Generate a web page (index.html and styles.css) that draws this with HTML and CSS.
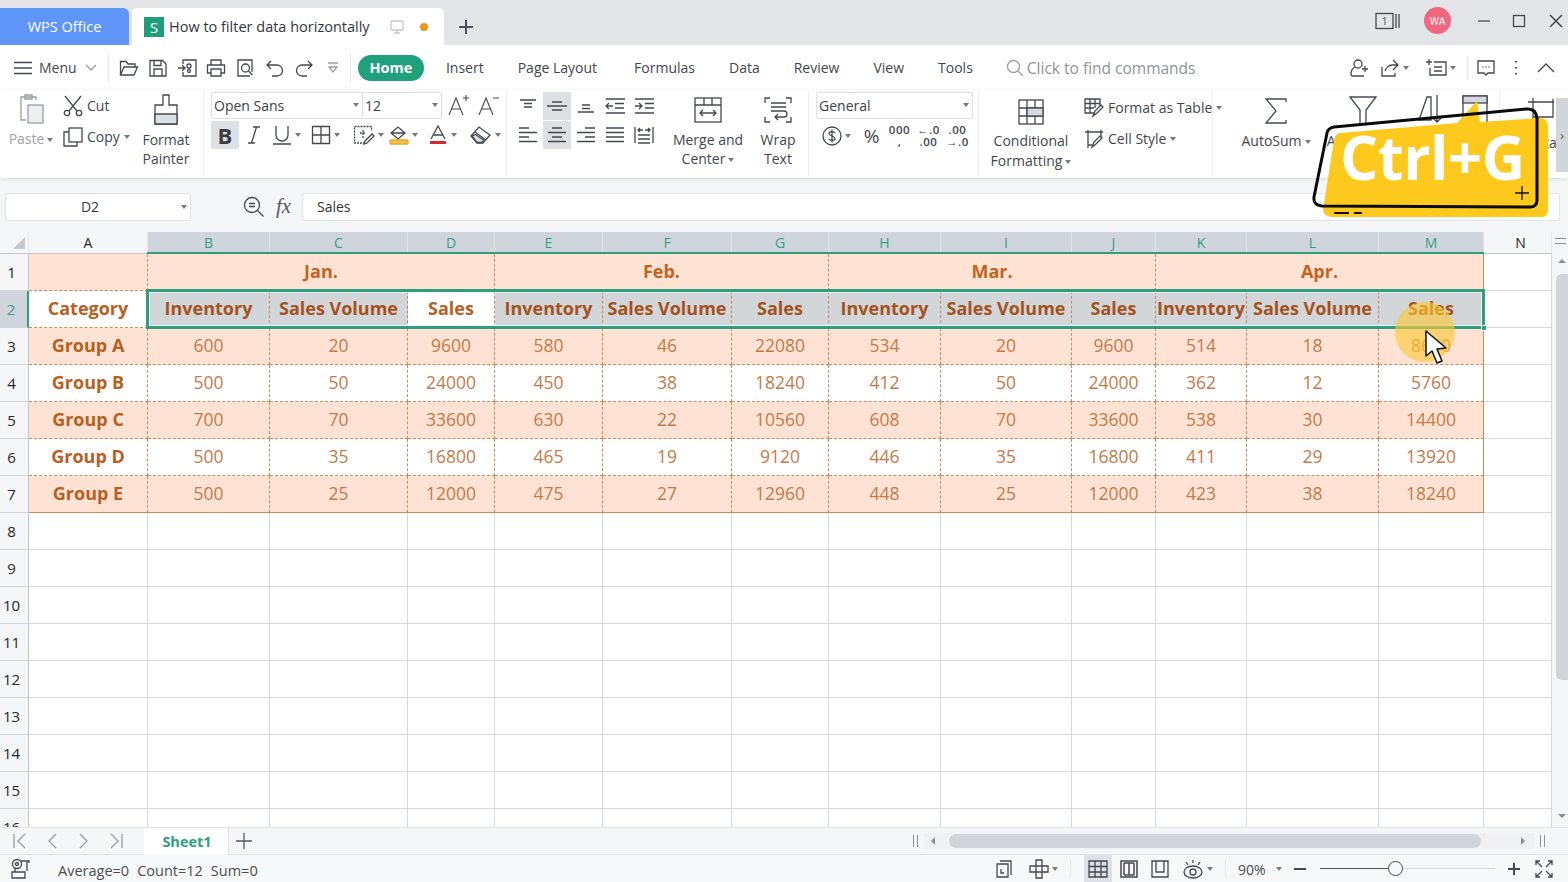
FILE: index.html
```html
<!DOCTYPE html>
<html lang="en">
<head>
<meta charset="utf-8">
<title>How to filter data horizontally</title>
<link rel="stylesheet" href="styles.css">
</head>
<body>
<div class="app">
  <header class="titlebar">
    <div class="wps-tab">WPS Office</div>
    <div class="doc-tab">
      <span class="doc-logo">S</span>
      <span class="doc-name">How to filter data horizontally</span>
      <svg class="ic mon" width="16" height="16" viewBox="0 0 16 16"><rect x="2" y="2" width="12" height="9" rx="1"/><path d="M8 11v3M5 14h6"/></svg>
      <span class="dot"></span>
    </div>
    <svg class="ic plus" width="16" height="16" viewBox="0 0 16 16"><path d="M8 1v14M1 8h14"/></svg>
    <div class="win">
      <svg class="ic" width="26" height="18" viewBox="0 0 26 18"><rect x="1" y="1.500" width="17" height="15"/><path d="M21 2v14M24 2v14"/><text x="6.500" y="13" class="tiny">1</text></svg>
      <span class="avatar">WA</span>
      <svg class="ic w-min" width="14" height="14" viewBox="0 0 14 14"><path d="M1 7h12"/></svg>
      <svg class="ic w-max" width="14" height="14" viewBox="0 0 14 14"><rect x="1.500" y="1.500" width="11" height="11"/></svg>
      <svg class="ic w-x" width="14" height="14" viewBox="0 0 14 14"><path d="M1 1l12 12M13 1L1 13"/></svg>
    </div>
  </header>

  <nav class="menubar">
    <svg class="ic" width="18" height="14" viewBox="0 0 18 14"><path d="M0 1.500h18M0 7h18M0 12.500h18"/></svg>
    <span class="menu-label">Menu</span>
    <svg class="ic lite chev" width="12" height="8" viewBox="0 0 12 8"><path d="M1 1l5 5 5-5"/></svg>
    <span class="vsep"></span>
    <div class="quick">
      <svg class="ic" width="20" height="20" viewBox="0 0 20 20"><path d="M1.500 17V3.500h5.500l2 2.500h7v3M1.500 17H15l3.500-8H5z"/></svg>
      <svg class="ic" width="20" height="20" viewBox="0 0 20 20"><path d="M2 2.500h12.500l3.500 3.500v12H2zM6 2.500v5h7v-5M6 18v-7h8v7"/></svg>
      <svg class="ic" width="20" height="20" viewBox="0 0 20 20"><path d="M6 6V2h13v16H6v-4M1 10h7M5 7l3 3-3 3"/><circle cx="12" cy="8" r="2"/><circle cx="12" cy="13" r="1.500"/></svg>
      <svg class="ic" width="20" height="20" viewBox="0 0 20 20"><path d="M5 7V2h10v5M5 15H1.500V7h17v8H15M5 11h10v7H5z"/></svg>
      <svg class="ic" width="20" height="20" viewBox="0 0 20 20"><path d="M15 18H3V2h14v12"/><circle cx="10.500" cy="10" r="4"/><path d="M13.500 13l4 4"/></svg>
      <svg class="ic" width="20" height="20" viewBox="0 0 20 20"><path d="M6 3L2 7l4 4M2 7h10a5.500 5.500 0 0 1 0 11H7"/></svg>
      <svg class="ic" width="20" height="20" viewBox="0 0 20 20"><path d="M14 3l4 4-4 4M18 7H8a5.500 5.500 0 0 0 0 11h5"/></svg>
      <svg class="ic lite qa" width="12" height="12" viewBox="0 0 12 12"><path d="M1 1h10M2 5h8L6 10z"/></svg>
    </div>
    <span class="vsep sep2"></span>
    <span class="home">Home</span>
    <div class="tabs">
      <span>Insert</span><span>Page Layout</span><span class="t-form">Formulas</span><span>Data</span><span>Review</span><span>View</span><span>Tools</span>
    </div>
    <div class="find">
      <svg class="ic lite" width="18" height="18" viewBox="0 0 18 18"><circle cx="7.500" cy="7.500" r="6"/><path d="M12 12l5 5"/></svg>
      <span>Click to find commands</span>
    </div>
    <div class="menu-right">
      <svg class="ic" width="20" height="20" viewBox="0 0 20 20"><circle cx="9" cy="6" r="4"/><path d="M6 9c-2 1-4 4-4 7 0 1 1 2 2 2h11M13 11h6M16 8v6"/></svg>
      <span class="with-caret"><svg class="ic" width="20" height="20" viewBox="0 0 20 20"><path d="M13 2l5 5-5 5M18 7h-6c-3 0-6 3-7 6M2 9v9h13v-3"/></svg><i class="caret"></i></span>
      <span class="with-caret"><svg class="ic" width="22" height="20" viewBox="0 0 22 20"><path d="M4 1v6M1 4h6M9 4h12v13H5V10M9 9h8M9 13h8"/></svg><i class="caret"></i></span>
      <span class="vsep sep3"></span>
      <svg class="ic" width="18" height="18" viewBox="0 0 18 18"><path d="M1 2h16v12h-6l-2 2-2-2H1zM5.500 8h1M8.500 8h1M11.500 8h1"/></svg>
      <svg class="ic dots" width="4" height="16" viewBox="0 0 4 16"><path d="M2 1v1.500M2 7v1.500M2 13v1.500" stroke-width="2"/></svg>
      <svg class="ic up" width="18" height="10" viewBox="0 0 18 10"><path d="M1 9l8-8 8 8"/></svg>
    </div>
  </nav>

  <section class="ribbon">
    <div class="grp g-clip">
      <div class="btn paste">
        <svg class="ic lite" width="30" height="30" viewBox="0 0 30 30"><path d="M20 6V3H5v23h5"/><path d="M9 1h7v4H9z"/><rect x="12" y="11" width="15" height="18" fill="#eceef0"/></svg>
        <span class="lbl off">Paste<i class="caret"></i></span>
      </div>
      <div class="stack clip-stack">
        <div class="row-btn"><svg class="ic" width="20" height="22" viewBox="0 0 20 22"><path d="M2 1l12 15M18 1L6 16"/><circle cx="4" cy="18" r="2.700"/><circle cx="16" cy="18" r="2.700"/></svg><span>Cut</span></div>
        <div class="row-btn"><svg class="ic" width="20" height="20" viewBox="0 0 20 20"><rect x="6" y="1" width="13" height="14"/><path d="M6 5H1v14h13v-4"/></svg><span>Copy</span><i class="caret"></i></div>
      </div>
      <div class="btn painter">
        <svg class="ic" width="26" height="32" viewBox="0 0 26 32"><path d="M10 1h6v10h8v19H2V11h8z"/><path d="M2 20h22v10H2z" fill="#dcdfe3"/></svg>
        <span class="lbl">Format<br>Painter</span>
      </div>
    </div>

    <div class="grp g-font">
      <div class="font-top">
        <div class="combo c-font"><span>Open Sans</span><i class="caret"></i></div>
        <div class="combo c-size"><span>12</span><i class="caret"></i></div>
        <svg class="ic aa" width="24" height="24" viewBox="0 0 24 24"><path d="M2 21L9 4l7 17M4.500 15h9M16 4h6M19 1v6"/></svg>
        <svg class="ic aa" width="24" height="24" viewBox="0 0 24 24"><path d="M2 21L9 4l7 17M4.500 15h9M16 4h6"/></svg>
      </div>
      <div class="font-bot">
        <span class="tool t-b on"><b class="bold-b">B</b></span>
        <span class="tool t-i"><svg class="ic" width="14" height="18" viewBox="0 0 14 18"><path d="M9.500 1L4.500 17M6 1h7M1 17h7"/></svg></span>
        <span class="tool t-c"><svg class="ic" width="20" height="20" viewBox="0 0 20 20"><path d="M4 1v9a6 6 0 0 0 12 0V1M1 19h18"/></svg><i class="caret"></i></span>
        <span class="tool t-c"><svg class="ic" width="20" height="20" viewBox="0 0 20 20"><path d="M1.500 1.500h17v17h-17zM10 1.500v17M1.500 10h17"/></svg><i class="caret"></i></span>
        <span class="tool t-c t-wide"><svg class="ic" width="22" height="20" viewBox="0 0 22 20"><path d="M12 18H1.500V1.500h17V6M7 8h6M10 5v8" stroke-dasharray="2 1"/><path d="M12 16l7-7 2 2-7 7-3 1z"/></svg><i class="caret"></i></span>
        <span class="tool t-c"><svg class="ic" width="20" height="20" viewBox="0 0 20 20"><path d="M2 8l7-6 7 6-7 6zM2 8h14"/><rect x="1" y="15" width="18" height="4" rx="1" fill="#f5c342" stroke="#e0a92a"/></svg><i class="caret"></i></span>
        <span class="tool t-c"><svg class="ic" width="20" height="20" viewBox="0 0 20 20"><path d="M3 14L10 1l7 13M5.500 10h9"/><path d="M2 17.500h16" stroke="#d8262c" stroke-width="3"/></svg><i class="caret"></i></span>
        <span class="tool t-c t-wide"><svg class="ic" width="22" height="20" viewBox="0 0 22 20"><path d="M1 11l8-9 11 8-7 8H7zM5 7l11 8"/><path d="M5.500 9.500l8 5.500-1.500 2.500H7L2 11z" fill="#dcdfe3"/></svg><i class="caret"></i></span>
      </div>
    </div>

    <div class="grp g-align">
      <div class="align-grid">
        <span class="a"><svg class="ic" width="18" height="14" viewBox="0 0 18 14"><path d="M1 1h16M5 4.500h8M5 8h8"/></svg></span>
        <span class="a on"><svg class="ic" width="20" height="14" viewBox="0 0 20 14"><path d="M5 3h10M0 7h20M5 11h10"/></svg></span>
        <span class="a"><svg class="ic" width="18" height="14" viewBox="0 0 18 14"><path d="M5 6h8M5 9.500h8M1 13h16"/></svg></span>
        <span class="a"><svg class="ic" width="20" height="16" viewBox="0 0 20 16"><path d="M1 1h19M1 15h19M10 5.500h9M10 10h9M1 8h7M4 5L1 8l3 3"/></svg></span>
        <span class="a"><svg class="ic" width="20" height="16" viewBox="0 0 20 16"><path d="M1 1h19M1 15h19M11 5.500h9M11 10h9M1 8h7M5 5l3 3-3 3"/></svg></span>
        <span class="a"><svg class="ic" width="18" height="16" viewBox="0 0 18 16"><path d="M0 1h10M0 5.500h18M0 10h10M0 14.500h18"/></svg></span>
        <span class="a on"><svg class="ic" width="18" height="16" viewBox="0 0 18 16"><path d="M4 1h10M0 5.500h18M4 10h10M0 14.500h18"/></svg></span>
        <span class="a"><svg class="ic" width="18" height="16" viewBox="0 0 18 16"><path d="M8 1h10M0 5.500h18M8 10h10M0 14.500h18"/></svg></span>
        <span class="a"><svg class="ic" width="18" height="16" viewBox="0 0 18 16"><path d="M0 1h18M0 5.500h18M0 10h18M0 14.500h18"/></svg></span>
        <span class="a"><svg class="ic" width="20" height="18" viewBox="0 0 20 18"><path d="M1 1v16M19 1v16M4 9h12M4 13h12M4 17h12M4 4h5M11 4h5M6 2L4 4l2 2M14 2l2 2-2 2"/></svg></span>
      </div>
      <div class="btn merge">
        <svg class="ic" width="28" height="26" viewBox="0 0 28 26"><rect x="1" y="1" width="26" height="24"/><path d="M1 8h26M10 1v7M18 1v7M6 16h16M9 13l-3 3 3 3M19 13l3 3-3 3"/></svg>
        <span class="lbl">Merge and<br>Center<i class="caret"></i></span>
      </div>
      <div class="btn wrap">
        <svg class="ic" width="28" height="26" viewBox="0 0 28 26"><path d="M6 1H1v5M22 1h5v5M1 20v5h5M27 20v5h-5M7 6h15M7 10h15M7 14h13a2 2 0 0 1 0 6h-9M14 17l-3 3 3 3"/></svg>
        <span class="lbl">Wrap<br>Text</span>
      </div>
    </div>

    <div class="grp g-num">
      <div class="combo c-gen"><span>General</span><i class="caret"></i></div>
      <div class="num-row">
        <span class="with-caret n-cur"><svg class="ic" width="20" height="20" viewBox="0 0 20 20"><circle cx="10" cy="10" r="9"/><path d="M13 7c-1-2-6-2-6 .5S13 10 13 12.500 8 15 7 13M10 3.500v13"/></svg><i class="caret"></i></span>
        <span class="n-t n-pct">%</span>
        <span class="n-t n-small">000<br>,</span>
        <span class="n-t n-small">←.0<br>.00</span>
        <span class="n-t n-small">.00<br>→.0</span>
      </div>
    </div>

    <div class="grp g-style">
      <div class="btn cond">
        <svg class="ic" width="26" height="26" viewBox="0 0 26 26"><rect x="1" y="1" width="24" height="24"/><path d="M1 9h24M1 17h24M9 1v24M17 1v24"/><rect x="9" y="9" width="16" height="8" fill="#d5d8dc"/></svg>
        <span class="lbl">Conditional<br>Formatting<i class="caret"></i></span>
      </div>
      <div class="stack style-stack">
        <div class="row-btn"><svg class="ic" width="20" height="20" viewBox="0 0 20 20"><path d="M10 15H1V1h15v7M1 5.500h15M1 10h9M6 1v14M11 1v9"/><path d="M9 18l2-5 6-6 2 2-6 6z"/></svg><span>Format as Table</span><i class="caret"></i></div>
        <div class="row-btn"><svg class="ic" width="20" height="20" viewBox="0 0 20 20"><path d="M1 3h18M4 1v18M17 1v7M4 16h4"/><path d="M8 18l2-5 6-6 2 2-6 6z"/></svg><span>Cell Style</span><i class="caret"></i></div>
      </div>
    </div>

    <div class="grp g-edit">
      <div class="btn autosum">
        <svg class="ic" width="22" height="26" viewBox="0 0 22 26"><path d="M21 4V1H1l10 12L1 25h20v-3"/></svg>
        <span class="lbl">AutoSum<i class="caret"></i></span>
      </div>
      <div class="btn autofilter">
        <svg class="ic" width="28" height="30" viewBox="0 0 28 30"><path d="M1 1h26L17 14v14h-6V14z"/></svg>
        <span class="lbl">AutoFilter<i class="caret"></i></span>
      </div>
      <div class="btn sort">
        <svg class="ic" width="26" height="30" viewBox="0 0 26 30"><path d="M2 26L10 3h4v23H2zM20 1v27M16 24l4 4 4-4"/></svg>
      </div>
      <div class="btn fillbtn">
        <svg class="ic" width="26" height="30" viewBox="0 0 26 30"><rect x="1" y="1" width="24" height="28"/><rect x="1" y="1" width="24" height="7" fill="#d5d8dc"/></svg>
      </div>
    </div>

    <div class="grp g-last">
      <div class="btn crop">
        <svg class="ic" width="28" height="24" viewBox="0 0 28 24"><path d="M1 5h26M6 1v22M6 20h20V2"/></svg>
        <span class="lbl">Data</span>
      </div>
    </div>
    <div class="rib-more">›</div>
  </section>

  <section class="formula">
    <div class="namebox"><span>D2</span><i class="caret"></i></div>
    <svg class="ic zoom-ic" width="22" height="22" viewBox="0 0 22 22"><circle cx="9" cy="9" r="7.500"/><path d="M14.500 14.500l6 6M6 7.500h6M6 10.500h6"/></svg>
    <span class="fx">fx</span>
    <div class="fbox">Sales</div>
  </section>

  <section class="sheet-wrap">
    <div class="sheet">
      <div class="ch corner"><i></i></div><div class="ch">A</div><div class="ch s">B</div><div class="ch s">C</div><div class="ch s">D</div><div class="ch s">E</div><div class="ch s">F</div><div class="ch s">G</div><div class="ch s">H</div><div class="ch s">I</div><div class="ch s">J</div><div class="ch s">K</div><div class="ch s">L</div><div class="ch s">M</div><div class="ch ch-n">N</div>

      <div class="rh">1</div><div class="c p"></div><div class="c p m">Jan.</div><div class="c p m">Feb.</div><div class="c p m">Mar.</div><div class="c p m last">Apr.</div><div class="g"></div>

      <div class="rh sel-h">2</div><div class="c t">Category</div>
      <div class="c t gy">Inventory</div><div class="c t gy">Sales Volume</div><div class="c t">Sales</div>
      <div class="c t gy">Inventory</div><div class="c t gy">Sales Volume</div><div class="c t gy">Sales</div>
      <div class="c t gy">Inventory</div><div class="c t gy">Sales Volume</div><div class="c t gy">Sales</div>
      <div class="c t gy">Inventory</div><div class="c t gy">Sales Volume</div><div class="c t gy last">Sales</div><div class="g"></div>

      <div class="rh">3</div><div class="c t p">Group A</div><div class="c p">600</div><div class="c p">20</div><div class="c p">9600</div><div class="c p">580</div><div class="c p">46</div><div class="c p">22080</div><div class="c p">534</div><div class="c p">20</div><div class="c p">9600</div><div class="c p">514</div><div class="c p">18</div><div class="c p last">8640</div><div class="g"></div>

      <div class="rh">4</div><div class="c t">Group B</div><div class="c">500</div><div class="c">50</div><div class="c">24000</div><div class="c">450</div><div class="c">38</div><div class="c">18240</div><div class="c">412</div><div class="c">50</div><div class="c">24000</div><div class="c">362</div><div class="c">12</div><div class="c last">5760</div><div class="g"></div>

      <div class="rh">5</div><div class="c t p">Group C</div><div class="c p">700</div><div class="c p">70</div><div class="c p">33600</div><div class="c p">630</div><div class="c p">22</div><div class="c p">10560</div><div class="c p">608</div><div class="c p">70</div><div class="c p">33600</div><div class="c p">538</div><div class="c p">30</div><div class="c p last">14400</div><div class="g"></div>

      <div class="rh">6</div><div class="c t">Group D</div><div class="c">500</div><div class="c">35</div><div class="c">16800</div><div class="c">465</div><div class="c">19</div><div class="c">9120</div><div class="c">446</div><div class="c">35</div><div class="c">16800</div><div class="c">411</div><div class="c">29</div><div class="c last">13920</div><div class="g"></div>

      <div class="rh">7</div><div class="c t p b">Group E</div><div class="c p b">500</div><div class="c p b">25</div><div class="c p b">12000</div><div class="c p b">475</div><div class="c p b">27</div><div class="c p b">12960</div><div class="c p b">448</div><div class="c p b">25</div><div class="c p b">12000</div><div class="c p b">423</div><div class="c p b">38</div><div class="c p b last">18240</div><div class="g"></div>

      <div class="rh">8</div><div class="g"></div><div class="g"></div><div class="g"></div><div class="g"></div><div class="g"></div><div class="g"></div><div class="g"></div><div class="g"></div><div class="g"></div><div class="g"></div><div class="g"></div><div class="g"></div><div class="g"></div><div class="g"></div>
      <div class="rh">9</div><div class="g"></div><div class="g"></div><div class="g"></div><div class="g"></div><div class="g"></div><div class="g"></div><div class="g"></div><div class="g"></div><div class="g"></div><div class="g"></div><div class="g"></div><div class="g"></div><div class="g"></div><div class="g"></div>
      <div class="rh">10</div><div class="g"></div><div class="g"></div><div class="g"></div><div class="g"></div><div class="g"></div><div class="g"></div><div class="g"></div><div class="g"></div><div class="g"></div><div class="g"></div><div class="g"></div><div class="g"></div><div class="g"></div><div class="g"></div>
      <div class="rh">11</div><div class="g"></div><div class="g"></div><div class="g"></div><div class="g"></div><div class="g"></div><div class="g"></div><div class="g"></div><div class="g"></div><div class="g"></div><div class="g"></div><div class="g"></div><div class="g"></div><div class="g"></div><div class="g"></div>
      <div class="rh">12</div><div class="g"></div><div class="g"></div><div class="g"></div><div class="g"></div><div class="g"></div><div class="g"></div><div class="g"></div><div class="g"></div><div class="g"></div><div class="g"></div><div class="g"></div><div class="g"></div><div class="g"></div><div class="g"></div>
      <div class="rh">13</div><div class="g"></div><div class="g"></div><div class="g"></div><div class="g"></div><div class="g"></div><div class="g"></div><div class="g"></div><div class="g"></div><div class="g"></div><div class="g"></div><div class="g"></div><div class="g"></div><div class="g"></div><div class="g"></div>
      <div class="rh">14</div><div class="g"></div><div class="g"></div><div class="g"></div><div class="g"></div><div class="g"></div><div class="g"></div><div class="g"></div><div class="g"></div><div class="g"></div><div class="g"></div><div class="g"></div><div class="g"></div><div class="g"></div><div class="g"></div>
      <div class="rh">15</div><div class="g"></div><div class="g"></div><div class="g"></div><div class="g"></div><div class="g"></div><div class="g"></div><div class="g"></div><div class="g"></div><div class="g"></div><div class="g"></div><div class="g"></div><div class="g"></div><div class="g"></div><div class="g"></div>
      <div class="rh">16</div><div class="g"></div><div class="g"></div><div class="g"></div><div class="g"></div><div class="g"></div><div class="g"></div><div class="g"></div><div class="g"></div><div class="g"></div><div class="g"></div><div class="g"></div><div class="g"></div><div class="g"></div><div class="g"></div>

      <div class="hdr-line"></div>
      <div class="selection"><i></i></div>
    </div>
    <aside class="vscroll">
      <div class="split-h"></div>
      <div class="tri-up"></div>
      <div class="v-thumb"></div>
      <div class="tri-down"></div>
    </aside>
  </section>

  <section class="tabsbar">
    <div class="sheet-nav">
      <svg class="ic lite" width="14" height="16" viewBox="0 0 14 16"><path d="M1 1v14M12 1L5 8l7 7"/></svg>
      <svg class="ic lite" width="14" height="16" viewBox="0 0 14 16"><path d="M11 1L4 8l7 7"/></svg>
      <svg class="ic lite" width="14" height="16" viewBox="0 0 14 16"><path d="M3 1l7 7-7 7"/></svg>
      <svg class="ic lite" width="14" height="16" viewBox="0 0 14 16"><path d="M13 1v14M2 1l7 7-7 7"/></svg>
    </div>
    <div class="sheet-tab">Sheet1</div>
    <svg class="ic add-sheet" width="16" height="16" viewBox="0 0 16 16"><path d="M8 0v16M0 8h16"/></svg>
    <div class="hscroll">
      <span class="bars"></span>
      <div class="h-track"><i class="tri-l"></i><div class="h-thumb"></div><i class="tri-r"></i></div>
      <span class="bars"></span>
    </div>
  </section>

  <footer class="status">
    <svg class="ic st-ic" width="22" height="22" viewBox="0 0 22 22"><circle cx="7" cy="6" r="4.500"/><circle cx="7" cy="6" r="1.500"/><path d="M11 3h6v10M14 3h5v2M2 14h13v6H2zM5 10v4"/></svg>
    <span class="st-text">Average=0</span><span class="st-text">Count=12</span><span class="st-text">Sum=0</span>
    <div class="st-right">
      <svg class="ic" width="16" height="18" viewBox="0 0 16 18"><path d="M4 1h11v14M1 4h11v13H1zM5 9v4h3"/></svg>
      <span class="with-caret st-cross"><svg class="ic" width="20" height="20" viewBox="0 0 20 20"><path d="M7 1h6v6h6v6h-6v6H7v-6H1V7h6zM7 7h6v6H7z"/></svg><i class="caret"></i></span>
      <span class="vsep sep4"></span>
      <span class="view on"><svg class="ic" width="20" height="18" viewBox="0 0 20 18"><path d="M1 1h18v16H1zM1 6.500h18M1 12h18M7 1v16M13 1v16"/></svg></span>
      <svg class="ic view2" width="18" height="18" viewBox="0 0 18 18"><rect x="1" y="1" width="16" height="16"/><path d="M4 3v12M9 3v12M14 3v12M4 3h10M4 15h10"/></svg>
      <svg class="ic view3" width="18" height="18" viewBox="0 0 18 18"><path d="M1 1h16v16H1zM5 1v11h8V1"/></svg>
      <span class="with-caret view4"><svg class="ic" width="22" height="20" viewBox="0 0 22 20"><ellipse cx="11" cy="13" rx="9" ry="6"/><circle cx="11" cy="13" r="3"/><path d="M11 1v3M4 3l2 3M18 3l-2 3"/></svg><i class="caret"></i></span>
      <span class="vsep sep5"></span>
      <span class="pct">90%</span><i class="caret pct-c"></i>
      <svg class="ic minus" width="12" height="4" viewBox="0 0 12 4"><path d="M0 2h12" stroke-width="2"/></svg>
      <div class="slider"><i></i></div>
      <svg class="ic st-plus" width="12" height="12" viewBox="0 0 12 12"><path d="M6 0v12M0 6h12" stroke-width="2"/></svg>
      <svg class="ic full" width="18" height="18" viewBox="0 0 18 18"><path d="M7 7L1 1M1 5V1h4M11 7l6-6M13 1h4v4M7 11l-6 6M1 13v4h4M11 11l6 6M17 13v4h-4"/></svg>
    </div>
  </footer>

  <div class="callout">
    <svg class="callout-bg" width="244" height="124" viewBox="0 0 244 124">
      <path class="yel" d="M30 33L147 23L167 1L170 22L230 18Q238 18 238 27V110Q238 117 232 117L23 117Q14 117 13 110L24 40Q25 34 30 33z"/>
      <path class="blk" d="M24 27L216 9Q226 8 227 18L227 100Q227 107 220 107L12 106Q3 105 4 97L17 33Q18 28 24 27z"/>
      <path class="thin" d="M205 93h14M212 86v14"/>
      <path class="thin thick" d="M24 113h15M44 113h8"/>
    </svg>
    <span class="callout-text">Ctrl+G</span>
  </div>

  <div class="pointer">
    <span class="halo"></span>
    <svg class="arrow" width="26" height="36" viewBox="0 0 26 36"><path d="M2 1l0 25 6-5 5 12 5-2-5-12 9-1z" fill="#fff" stroke="#111" stroke-width="1.500" stroke-linejoin="round"/></svg>
  </div>
</div>
</body>
</html>
```
FILE: styles.css
```css
* { box-sizing: border-box; }
html, body { margin: 0; height: 100%; }
body { font-family: "Open Sans", "Noto Sans", sans-serif; font-size: 14px; color: #43474d; background: #fff; overflow: hidden; }
.app { position: relative; width: 1568px; height: 882px; display: flex; flex-direction: column; overflow: hidden; }
i { font-style: normal; }
svg { display: block; flex: none; }
.ic { fill: none; stroke: #44484e; stroke-width: 1.300; }
.ic.lite { stroke: #9a9ea3; }
.tiny { font-size: 11px; fill: #55595f; stroke: none; font-family: "Open Sans", sans-serif; }
.caret { display: inline-block; width: 0; height: 0; border-top: 4px solid #77797d; border-left: 3.500px solid transparent; border-right: 3.500px solid transparent; margin-left: 3px; vertical-align: middle; flex: none; }
.with-caret { display: inline-flex; align-items: center; }

.titlebar { height: 45px; background: #e3e5e8; display: flex; align-items: flex-end; flex: none; }
.wps-tab { width: 129px; height: 37px; background: #5f95f6; color: #fff; font-size: 14.500px; display: flex; align-items: center; justify-content: center; border-radius: 0 6px 0 0; }
.doc-tab { width: 312px; height: 37px; margin-left: 3px; background: #fff; border-radius: 5px 5px 0 0; display: flex; align-items: center; padding-left: 12px; color: #33363b; font-size: 14.500px; }
.doc-logo { width: 20px; height: 20px; background: #1f9f79; color: #fff; font-size: 15px; line-height: 20px; text-align: center; margin-right: 5px; }
.doc-name { width: 214px; white-space: nowrap; }
.mon { stroke: #c4c7cb; margin-left: 6px; }
.dot { width: 8px; height: 8px; background: #e8991c; border-radius: 50%; margin-left: 15px; }
.plus { margin: 0 0 10px 14px; stroke-width: 2; stroke: #4d525a; }
.win { margin-left: auto; height: 45px; display: flex; align-items: center; padding-bottom: 4px; }
.avatar { width: 27px; height: 27px; border-radius: 50%; background: #f2677f; color: #fff; font-size: 10px; display: flex; align-items: center; justify-content: center; margin: 0 0 0 23px; }
.w-min { margin-left: 26px; }
.w-max { margin-left: 21px; }
.w-x { margin: 0 5px 0 23px; stroke-width: 1.500; }

.menubar { height: 45px; display: flex; align-items: center; padding-left: 14px; flex: none; background: #fff; }
.menu-label { margin-left: 7px; }
.chev { margin-left: 8px; }
.vsep { width: 1px; height: 28px; background: #e4e6e8; flex: none; }
.menubar > .vsep { margin-left: 11px; }
.quick { display: flex; align-items: center; gap: 9.200px; margin-left: 10px; }
.qa { margin-left: 4px; }
.menubar > .sep2 { margin-left: 11px; }
.home { background: #1fa27c; color: #fff; font-weight: 700; height: 26px; width: 66px; margin-left: 7px; border-radius: 13px; display: flex; align-items: center; justify-content: center; font-size: 14.500px; }
.tabs { display: flex; gap: 34px; margin-left: 22px; white-space: nowrap; }
.t-form { margin-left: 3px; }
.find { display: flex; align-items: center; gap: 3px; color: #8f9398; font-size: 15.500px; margin-left: 33px; white-space: nowrap; }
.menu-right { margin-left: auto; display: flex; align-items: center; }
.menu-right .with-caret { margin-left: 10px; }
.menu-right .with-caret + .with-caret { margin-left: 16px; }
.menu-right .sep3 { height: 24px; margin: 0 9px 0 11px; }
.dots { margin-left: 19px; }
.up { margin: 0 13px 0 19px; }
.menu-right > svg:first-child { margin-right: 1px; }

.ribbon { height: 88px; flex: none; display: flex; position: relative; background: #fff; box-shadow: 0 1px 4px rgba(0,0,0,.12); z-index: 1; overflow: hidden; }
.grp { height: 86px; border-right: 1px solid #eceef0; display: flex; flex: none; }
.btn { display: flex; flex-direction: column; align-items: center; flex: none; }
.lbl { line-height: 19px; text-align: center; white-space: nowrap; }
.lbl.off { color: #a0a3a7; }
.stack { display: flex; flex-direction: column; }
.row-btn { display: flex; align-items: center; gap: 4px; height: 31px; white-space: nowrap; }
.row-btn .caret { margin-left: 0; }

.g-clip { width: 204px; }
.paste { width: 54px; margin-left: 4px; padding-top: 4px; }
.paste .lbl { margin-top: 5px; white-space: nowrap; }
.clip-stack { margin: 0 0 0 5px; width: 80px; }
.painter { width: 46px; padding-top: 4px; }
.painter .lbl { margin-top: 4px; }

.g-font { width: 303px; padding: 2px 0 0 7px; flex-direction: column; }
.font-top { display: flex; align-items: center; height: 27px; }
.combo { height: 27px; border: 1px solid #dcdfe2; display: flex; align-items: center; justify-content: space-between; padding: 0 3px 1px 2px; background: #fff; color: #3c4046; border-radius: 2px; }
.c-font { width: 151px; border-right: 0; border-radius: 2px 0 0 2px; }
.c-size { width: 80px; border-radius: 0 2px 2px 0; }
.aa { margin-left: 5px; margin-right: 1px; stroke-width: 1.100; }
.font-bot { display: flex; align-items: center; margin-top: 2px; }
.tool { height: 28px; display: flex; align-items: center; justify-content: center; flex: none; border-radius: 2px; }
.tool.on, .a.on { background: #dde1e6; }
.t-b { width: 28px; }
.t-i { width: 29px; }
.t-c { width: 39px; justify-content: flex-start; padding-left: 4px; }
.t-c.t-wide { padding-left: 7px; }
.t-c .caret { margin-left: 3px; }
.bold-b { font-size: 22px; color: #3a3e44; }

.g-align { width: 302px; padding: 2px 0 0 7px; }
.align-grid { display: grid; grid-template-columns: repeat(5, 29px); grid-auto-rows: 29px; align-self: flex-start; }
.a { width: 28px; height: 28px; display: flex; align-items: center; justify-content: center; }
.merge { width: 92px; margin-left: 3px; padding-top: 5px; }
.merge .lbl { margin-top: 7px; }
.wrap { width: 50px; margin-left: -1px; padding-top: 5px; }
.wrap .lbl { margin-top: 7px; }

.g-num { width: 170px; padding: 2px 0 0 7px; flex-direction: column; }
.c-gen { width: 157px; font-size: 14px; }
.num-row { display: flex; align-items: center; height: 30px; margin-top: 2px; }
.n-cur { margin-left: 6px; width: 36px; }
.n-t { text-align: center; line-height: 12px; }
.n-pct { font-size: 19px; width: 27px; line-height: 20px; }
.n-small { font-size: 11.500px; width: 29px; letter-spacing: .6px; font-weight: 600; }

.g-style { width: 234px; }
.cond { width: 100px; padding-top: 9px; margin-left: 2px; }
.cond .lbl { margin-top: 6px; line-height: 20px; }
.style-stack { margin: 2px 0 0 3px; }

.g-edit { width: 287px; }
.autosum { width: 100px; padding-top: 8px; margin-left: 13px; }
.autosum .lbl { margin-top: 7px; }
.autofilter { width: 74px; padding-top: 6px; }
.autofilter .lbl { margin-top: 5px; }
.sort { width: 60px; padding-top: 4px; }
.fillbtn { width: 30px; padding-top: 5px; }
.g-last { border: 0; width: 60px; }
.crop { padding: 7px 0 0 26px; }
.crop .lbl { margin-top: 12px; }
.rib-more { position: absolute; right: 0; top: 8px; bottom: 6px; width: 12px; background: #d2d5d9; color: #555; font-size: 12px; display: flex; align-items: center; justify-content: center; }

.formula { height: 54px; flex: none; background: #f5f6f7; display: flex; align-items: center; padding: 3px 8px 0 5px; }
.namebox { width: 186px; height: 28px; background: #fff; border: 1px solid #dfe1e4; border-radius: 2px; display: flex; align-items: center; padding: 0 3px 0 0; color: #33363b; }
.namebox span { flex: 1; text-align: center; padding-right: 4px; }
.zoom-ic { margin-left: 52px; }
.fx { font-family: "Liberation Serif", serif; font-style: italic; font-size: 21px; width: 21px; margin-left: 11px; color: #55595f; }
.fbox { flex: 1; height: 28px; margin-left: 5px; background: #fff; border: 1px solid #e2e4e6; border-radius: 2px; padding-left: 14px; line-height: 26px; color: #2f3236; }

.sheet-wrap { height: 595px; flex: none; display: flex; overflow: hidden; }
.sheet { position: relative; width: 1552px; flex: none; display: grid; grid-template-columns: 29px 119px 122px 138px 87px 108px 129px 97px 112px 131px 84px 91px 132px 105px 68px; grid-template-rows: 22px repeat(16, 37px); align-content: start; overflow: hidden; background: #fff; }
.ch { background: #f5f6f7; border-bottom: 1px solid #c2c6cb; border-right: 1px solid #e6e8ea; display: flex; align-items: center; justify-content: center; color: #24272b; font-size: 14px; line-height: 1; }
.ch.s { background: #cfd5db; color: #35a084; border-right-color: #dfe3e6; border-bottom-color: #cfd5db; }
.ch-n { padding-left: 6px; }
.corner { justify-content: flex-end; padding-right: 3px; }
.corner i { width: 0; height: 0; border-bottom: 12px solid #c5c8cc; border-left: 12px solid transparent; }
.rh { background: #f5f6f7; border-bottom: 1px solid #d2d5d9; border-right: 1px solid #c2c6cb; display: flex; align-items: center; justify-content: center; color: #24272b; font-size: 15px; padding-right: 5px; }
.rh.sel-h { background: #cfd5db; color: #35a084; border-right: 2px solid #2f9d7e; }
.c { display: flex; align-items: center; justify-content: center; color: #c47a4a; font-size: 17.500px; white-space: nowrap; border-right: 1px dashed #d38a58; border-bottom: 1px dashed #d38a58; padding-bottom: 2px; }
.c.p { background: #fee3d4; }
.c.t, .c.m { color: #b85f22; font-weight: 700; font-size: 18px; }
.c.gy { background: #d3d6d9; color: #a5521d; }
.c.m { grid-column: span 3; color: #c4631f; }
.c.b { border-bottom: 1px solid #d08a58; }
.c.last { border-right: 1px solid #d08a58; }
.g { border-right: 1px solid #d5d8dc; border-bottom: 1px solid #d5d8dc; }
.hdr-line { position: absolute; grid-column: 3 / 15; grid-row: 1 / 2; left: -1px; right: 0; bottom: 0; height: 2px; background: #2f9d7e; }
.selection { position: absolute; grid-column: 3 / 15; grid-row: 3 / 4; left: -2px; right: -1px; top: -2px; bottom: -1px; border: 3px solid #2f9d7e; box-shadow: inset 0 0 0 1px rgba(230,255,248,.8); pointer-events: none; }
.selection i { position: absolute; right: -5px; bottom: -5px; width: 6px; height: 6px; background: #2f9d7e; border: 1px solid #fff; }

.vscroll { flex: 1; background: #f5f6f7; position: relative; display: flex; flex-direction: column; align-items: flex-end; }
.split-h { width: 11px; height: 6px; margin: 6px 0 0; border-top: 1px solid #8c9096; border-bottom: 1px solid #8c9096; align-self: center; }
.tri-up { width: 0; height: 0; margin: 15px 2px 0 0; border-bottom: 4px solid #8c9096; border-left: 4px solid transparent; border-right: 4px solid transparent; }
.v-thumb { width: 12px; height: 406px; margin-top: 11px; background: #d1d4d8; border-radius: 6px 0 0 6px; }
.tri-down { width: 0; height: 0; margin: 134px 2px 0 0; border-top: 4px solid #8c9096; border-left: 4px solid transparent; border-right: 4px solid transparent; }

.tabsbar { height: 28px; flex: none; background: #f5f6f7; border-top: 1px solid #e2e4e6; border-bottom: 1px solid #e2e4e6; display: flex; align-items: center; }
.sheet-nav { display: flex; gap: 18px; padding-left: 13px; width: 144px; }
.sheet-tab { width: 85px; height: 27px; background: #fff; color: #2e9f80; font-weight: 700; display: flex; align-items: center; justify-content: center; font-size: 14.500px; border-right: 1px solid #e2e4e6; padding-left: 2px; }
.add-sheet { margin-left: 7px; stroke: #55595f; }
.hscroll { margin-left: auto; display: flex; align-items: center; gap: 6px; padding-right: 23px; }
.bars { width: 5px; height: 12px; border-left: 1px solid #8c9096; border-right: 1px solid #8c9096; }
.h-track { width: 610px; height: 16px; background: #f0f1f3; display: flex; align-items: center; }
.h-thumb { width: 532px; height: 14px; background: #d1d4d8; border-radius: 7px; margin-left: 14px; }
.tri-l { width: 0; height: 0; margin-left: 7px; border-right: 4px solid #8c9096; border-top: 4px solid transparent; border-bottom: 4px solid transparent; }
.tri-r { width: 0; height: 0; margin-left: 40px; border-left: 4px solid #8c9096; border-top: 4px solid transparent; border-bottom: 4px solid transparent; }

.status { flex: 1; display: flex; align-items: center; background: #f7f8f9; padding-left: 10px; color: #494d53; }
.st-ic { margin-right: 26px; }
.st-text { margin-right: 8px; font-size: 14.500px; padding-top: 3px; }
.st-right { margin-left: auto; display: flex; align-items: center; height: 100%; }
.st-cross { margin-left: 17px; }
.status .sep4 { height: 18px; margin: 0 13px 0 12px; }
.view { width: 28px; height: 100%; background: #dde1e6; display: flex; align-items: center; justify-content: center; }
.view2 { margin-left: 8px; stroke-width: 1.500; }
.view3 { margin-left: 13px; }
.view4 { margin-left: 13px; }
.status .sep5 { height: 18px; margin: 0 12px 0 12px; }
.pct { width: 37px; padding-top: 2px; }
.pct-c { margin-left: 1px; }
.minus { margin-left: 12px; }
.slider { width: 174px; height: 1px; margin-left: 14px; background: linear-gradient(to right, #555 0 68px, #d3d5d8 68px); position: relative; }
.slider i { position: absolute; left: 68px; top: -7px; width: 15px; height: 15px; border-radius: 50%; border: 1px solid #44484e; background: #f7f8f9; }
.st-plus { margin-left: 14px; }
.full { margin: 0 15px 0 15px; }

.callout { position: absolute; left: 1310px; top: 100px; width: 244px; height: 124px; z-index: 5; }
.yel { fill: #fdc91c; }
.blk { fill: none; stroke: #0b0b0b; stroke-width: 3; }
.thin { fill: none; stroke: #111; stroke-width: 1.300; }
.thick { stroke-width: 2; }
.callout-bg { position: absolute; left: 0; top: 0; }
.callout-text { position: absolute; left: 30px; top: 17px; color: #fff; font-family: "Open Sans", sans-serif; font-weight: 700; font-size: 60px; line-height: 80px; letter-spacing: -.5px; white-space: nowrap; }
.pointer { position: absolute; left: 1395px; top: 302px; width: 60px; height: 62px; z-index: 4; }
.halo { position: absolute; left: 0; top: 0; width: 60px; height: 60px; border-radius: 50%; background: rgba(253, 200, 50, .62); }
.arrow { position: absolute; left: 29px; top: 28px; }
```
